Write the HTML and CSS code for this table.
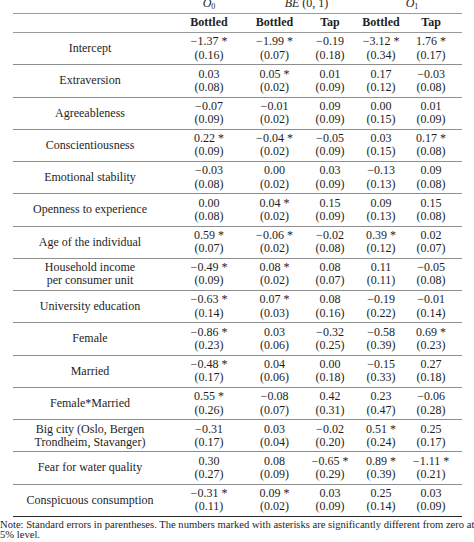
FILE: index.html
```html
<!DOCTYPE html>
<html>
<head>
<meta charset="utf-8">
<link rel="stylesheet" href="styles.css">
</head>
<body>
<table class="reg">
  <colgroup>
    <col class="c-label"><col class="c1"><col class="c2"><col class="c3"><col class="c4"><col class="c5">
  </colgroup>
  <thead>
    <tr class="h1">
      <th></th>
      <th><i>O</i><sub>0</sub></th>
      <th colspan="2"><i>BE</i> (0, 1)</th>
      <th colspan="2"><i>O</i><sub>1</sub></th>
    </tr>
    <tr class="h2">
      <th></th>
      <th>Bottled</th>
      <th>Bottled</th>
      <th>Tap</th>
      <th>Bottled</th>
      <th>Tap</th>
    </tr>
  </thead>
  <tbody>
    <tr><td>Intercept</td><td>−1.37 *<br>(0.16)</td><td>−1.99 *<br>(0.07)</td><td>−0.19<br>(0.18)</td><td>−3.12 *<br>(0.34)</td><td>1.76 *<br>(0.17)</td></tr>
    <tr><td>Extraversion</td><td>0.03<br>(0.08)</td><td>0.05 *<br>(0.02)</td><td>0.01<br>(0.09)</td><td>0.17<br>(0.12)</td><td>−0.03<br>(0.08)</td></tr>
    <tr><td>Agreeableness</td><td>−0.07<br>(0.09)</td><td>−0.01<br>(0.02)</td><td>0.09<br>(0.09)</td><td>0.00<br>(0.15)</td><td>0.01<br>(0.09)</td></tr>
    <tr><td>Conscientiousness</td><td>0.22 *<br>(0.09)</td><td>−0.04 *<br>(0.02)</td><td>−0.05<br>(0.09)</td><td>0.03<br>(0.15)</td><td>0.17 *<br>(0.08)</td></tr>
    <tr><td>Emotional stability</td><td>−0.03<br>(0.08)</td><td>0.00<br>(0.02)</td><td>0.03<br>(0.09)</td><td>−0.13<br>(0.13)</td><td>0.09<br>(0.08)</td></tr>
    <tr><td>Openness to experience</td><td>0.00<br>(0.08)</td><td>0.04 *<br>(0.02)</td><td>0.15<br>(0.09)</td><td>0.09<br>(0.13)</td><td>0.15<br>(0.08)</td></tr>
    <tr><td>Age of the individual</td><td>0.59 *<br>(0.07)</td><td>−0.06 *<br>(0.02)</td><td>−0.02<br>(0.08)</td><td>0.39 *<br>(0.12)</td><td>0.02<br>(0.07)</td></tr>
    <tr><td>Household income<br>per consumer unit</td><td>−0.49 *<br>(0.09)</td><td>0.08 *<br>(0.02)</td><td>0.08<br>(0.07)</td><td>0.11<br>(0.11)</td><td>−0.05<br>(0.08)</td></tr>
    <tr><td>University education</td><td>−0.63 *<br>(0.14)</td><td>0.07 *<br>(0.03)</td><td>0.08<br>(0.16)</td><td>−0.19<br>(0.22)</td><td>−0.01<br>(0.14)</td></tr>
    <tr><td>Female</td><td>−0.86 *<br>(0.23)</td><td>0.03<br>(0.06)</td><td>−0.32<br>(0.25)</td><td>−0.58<br>(0.39)</td><td>0.69 *<br>(0.23)</td></tr>
    <tr><td>Married</td><td>−0.48 *<br>(0.17)</td><td>0.04<br>(0.06)</td><td>0.00<br>(0.18)</td><td>−0.15<br>(0.33)</td><td>0.27<br>(0.18)</td></tr>
    <tr><td>Female*Married</td><td>0.55 *<br>(0.26)</td><td>−0.08<br>(0.07)</td><td>0.42<br>(0.31)</td><td>0.23<br>(0.47)</td><td>−0.06<br>(0.28)</td></tr>
    <tr><td>Big city (Oslo, Bergen<br>Trondheim, Stavanger)</td><td>−0.31<br>(0.17)</td><td>0.03<br>(0.04)</td><td>−0.02<br>(0.20)</td><td>0.51 *<br>(0.24)</td><td>0.25<br>(0.17)</td></tr>
    <tr><td>Fear for water quality</td><td>0.30<br>(0.27)</td><td>0.08<br>(0.09)</td><td>−0.65 *<br>(0.29)</td><td>0.89 *<br>(0.39)</td><td>−1.11 *<br>(0.21)</td></tr>
    <tr class="last"><td>Conspicuous consumption</td><td>−0.31 *<br>(0.11)</td><td>0.09 *<br>(0.02)</td><td>0.03<br>(0.09)</td><td>0.25<br>(0.14)</td><td>0.03<br>(0.09)</td></tr>
  </tbody>
</table>
<p class="note">Note: Standard errors in parentheses. The numbers marked with asterisks are significantly different from zero at<br>5% level.</p>
</body>
</html>
```
FILE: styles.css
```css
html, body {
  margin: 0;
  padding: 0;
  background: #fff;
  overflow: hidden;
}
body {
  width: 474px;
  height: 542px;
  font-family: "Liberation Serif", "DejaVu Serif", serif;
  color: #1e1e1e;
}
.reg {
  border-collapse: collapse;
  table-layout: fixed;
  width: 449px;
  margin: -5px 0 0 13px;
  font-size: 12px;
  line-height: 13.3px;
}
.c-label { width: 154px; }
.c1 { width: 84px; }
.c2 { width: 47px; }
.c3 { width: 64px; }
.c4 { width: 38px; }
.c5 { width: 62px; }
.reg th, .reg td {
  text-align: center;
  vertical-align: middle;
  padding: 0;
  white-space: nowrap;
}
.reg th sub {
  font-size: 8px;
  line-height: 0;
  vertical-align: -2px;
}
.h1 th {
  height: 18px;
  font-weight: normal;
  border-bottom: 1px solid #9a9a9a;
}
.h2 th {
  height: 18px;
  font-weight: bold;
  border-bottom: 1px solid #9a9a9a;
}
.reg tbody td {
  height: 32.27px;
  border-bottom: 1px solid #8e8e8e;
  box-sizing: border-box;
}
.reg tbody tr.last td {
  border-bottom: 1.5px solid #2a2a2a;
}
.note {
  margin: 3px 0 0 0;
  font-size: 10.6px;
  line-height: 10px;
  white-space: nowrap;
}
```
